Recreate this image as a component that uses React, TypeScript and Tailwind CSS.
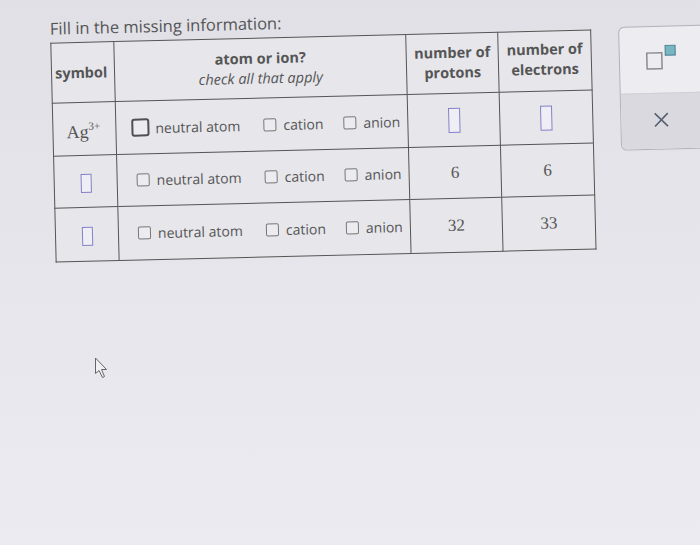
import React from "react";

const sans = { fontFamily: '"Open Sans", "Liberation Sans", sans-serif' };
const serif = { fontFamily: '"Liberation Serif", serif' };

function Box({ bold }: { bold?: boolean }) {
  return (
    <span
      className={
        bold
          ? "inline-block shrink-0 w-[18px] h-[18px] rounded-[3px] border-2 border-[#505050] bg-[#ececf0]"
          : "inline-block shrink-0 w-[13px] h-[13px] rounded-[2px] border border-[#777] bg-[#ececf0]"
      }
    />
  );
}

function Blank({ tall }: { tall?: boolean }) {
  return (
    <span
      className={
        tall
          ? "inline-block w-[12px] h-[25px] border border-[#8480c8] bg-[#eeeef4] align-middle"
          : "inline-block w-[11px] h-[19px] border border-[#8480c8] bg-[#eeeef4] align-middle"
      }
    />
  );
}

function Choices({ first }: { first?: boolean }) {
  return (
    <div className="flex items-center text-[14px] text-[#555]" style={sans}>
      <div
        className={
          first
            ? "flex items-center gap-[6px] w-[147px] pl-[15px]"
            : "flex items-center gap-[7px] w-[147px] pl-[19px]"
        }
      >
        <Box bold={first} />
        <span>neutral atom</span>
      </div>
      <div className="flex items-center gap-[7px] w-[80px]">
        <Box />
        <span>cation</span>
      </div>
      <div className="flex items-center gap-[7px]">
        <Box />
        <span>anion</span>
      </div>
    </div>
  );
}

export default function App() {
  const rows = [
    { sym: "ag", p: null, e: null, h: "h-[53px]" },
    { sym: null, p: "6", e: "6", h: "h-[52px]" },
    { sym: null, p: "32", e: "33", h: "h-[54px]" },
  ];
  return (
    <div className="w-[700px] h-[545px] bg-gradient-to-b from-[#e0e0e6] to-[#ebebf1] overflow-hidden">
      <div className="rotate-[-1.4deg] origin-[325px_150px]">
        <div className="pt-[12px] pl-[53px] text-[16.5px] leading-[20px] text-[#555]" style={sans}>
          Fill in the missing information:
        </div>
        <div className="flex items-start mt-[4px]">
          <table className="ml-[53px] border-collapse table-fixed w-[540px] bg-[#e6e6eb] text-[#555]">
            <colgroup>
              <col className="w-[63px]" />
              <col className="w-[292px]" />
              <col className="w-[92px]" />
              <col className="w-[93px]" />
            </colgroup>
            <thead>
              <tr className="h-[60px]">
                <th className="border border-[#555] text-[14.5px] font-bold text-left pl-[3px]" style={sans}>
                  symbol
                </th>
                <th className="border border-[#555] font-normal" style={sans}>
                  <div className="text-[14.5px] font-bold leading-[20px]">atom or ion?</div>
                  <div className="text-[14.5px] italic leading-[20px]">check all that apply</div>
                </th>
                <th className="border border-[#555] text-[14.5px] font-bold leading-[20px] pb-[2px]" style={sans}>
                  number of
                  <br />
                  protons
                </th>
                <th className="border border-[#555] text-[14.5px] font-bold leading-[20px] pb-[4px]" style={sans}>
                  number of
                  <br />
                  electrons
                </th>
              </tr>
            </thead>
            <tbody>
              {rows.map((r, i) => (
                <tr key={i} className={r.h}>
                  <td className="border border-[#555] text-center">
                    {r.sym ? (
                      <span className="text-[18px] text-[#555] relative top-[3px] left-[-1px]" style={serif}>
                        Ag<sup className="text-[11px] relative -top-[8px]">3+</sup>
                      </span>
                    ) : (
                      <Blank />
                    )}
                  </td>
                  <td className="border border-[#555]">
                    <Choices first={i === 0} />
                  </td>
                  <td className="border border-[#555] text-center text-[17px]" style={serif}>
                    {r.p ?? <Blank tall />}
                  </td>
                  <td className="border border-[#555] text-center text-[17px]" style={serif}>
                    {r.e ?? <Blank tall />}
                  </td>
                </tr>
              ))}
            </tbody>
          </table>
          <div className="ml-[27px] mt-[-2px] w-[100px] shrink-0 h-[124px] rounded-[6px] border border-[#b2b2ba] bg-[#ececf1] overflow-hidden flex flex-col">
            <div className="h-[66px] pl-[26px] pt-[18px]">
              <svg width="31" height="25" viewBox="0 0 31 25">
                <rect x="1" y="8" width="15" height="16" fill="none" stroke="#8a8a8a" strokeWidth="1.5" />
                <rect x="19.5" y="0.5" width="10" height="10" fill="#78b6c2" stroke="#4a7c8c" strokeWidth="1" />
              </svg>
            </div>
            <div className="flex-1 bg-[#d9d9df] border-t border-[#cfcfd6] pl-[32px] pt-[18px]">
              <svg width="16" height="16" viewBox="0 0 16 16">
                <path d="M1.5 1.5 L14.5 14.5 M14.5 1.5 L1.5 14.5" stroke="#566070" strokeWidth="1.6" />
              </svg>
            </div>
          </div>
        </div>
      </div>
      <div className="pl-[94px] pt-[101px]">
        <svg width="15" height="22" viewBox="0 0 15 22">
          <path d="M1.5 1 L1.5 16.5 L5 13.5 L8.5 20.5 L10.5 19.5 L7.5 12.5 L12.5 12.5 Z" fill="#f0f0f4" stroke="#666" strokeWidth="1" />
        </svg>
      </div>
    </div>
  );
}
